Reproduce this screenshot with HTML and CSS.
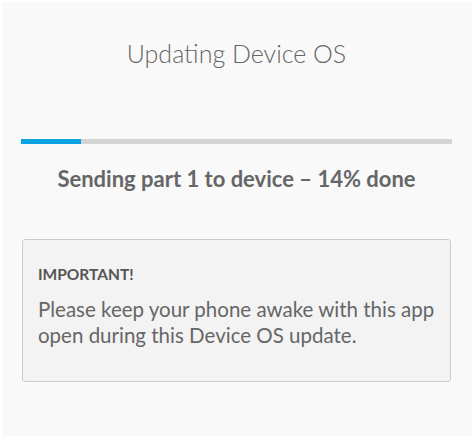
FILE: index.html
```html
<!DOCTYPE html>
<html>
<head>
<meta charset="utf-8">
<link rel="stylesheet" href="styles.css">
</head>
<body>
<main class="screen">
  <h1 class="title">Updating Device OS</h1>
  <div class="progress"><div class="progress-fill" style="width: 14%"></div></div>
  <p class="status">Sending part 1 to device – 14% done</p>
  <section class="notice">
    <h2 class="notice-title">IMPORTANT!</h2>
    <p class="notice-text">Please keep your phone awake with this app<br>open during this Device OS update.</p>
  </section>
</main>
</body>
</html>
```
FILE: styles.css
```css
html { background: #ffffff; }
body {
  margin: 0;
  font-family: Lato, "Open Sans", sans-serif;
  color: #666666;
}
.screen {
  margin: 2px 2px 4px 2px;
  height: 434px;
  background: #f9f9f9;
  padding: 0 20px 0 19px;
  box-sizing: border-box;
  display: flex;
  flex-direction: column;
}
.title {
  margin: 35px 0 0 0;
  font-size: 25px;
  font-weight: 300;
  line-height: 32px;
  text-align: center;
  color: #666666;
}
.progress {
  margin-top: 70px;
  height: 5px;
  background: #d4d4d4;
}
.progress-fill {
  height: 100%;
  background: #0ba3e3;
}
.status {
  margin: 23px 0 0 0;
  font-size: 22px;
  font-weight: 700;
  line-height: 24px;
  text-align: center;
  color: #666666;
}
.notice {
  margin: 48px 1px 0 1px;
  background: #f3f3f3;
  border: 1px solid #cccccc;
  border-radius: 3px;
  padding: 24px 4px 20px 15px;
  height: 143px;
  box-sizing: border-box;
}
.notice-title {
  margin: 0;
  font-size: 15.5px;
  font-weight: 700;
  line-height: 20px;
  color: #555555;
}
.notice-text {
  margin: 12px 0 0 0;
  font-size: 20.5px;
  font-weight: 400;
  line-height: 26px;
  white-space: nowrap;
  color: #666666;
}
```
